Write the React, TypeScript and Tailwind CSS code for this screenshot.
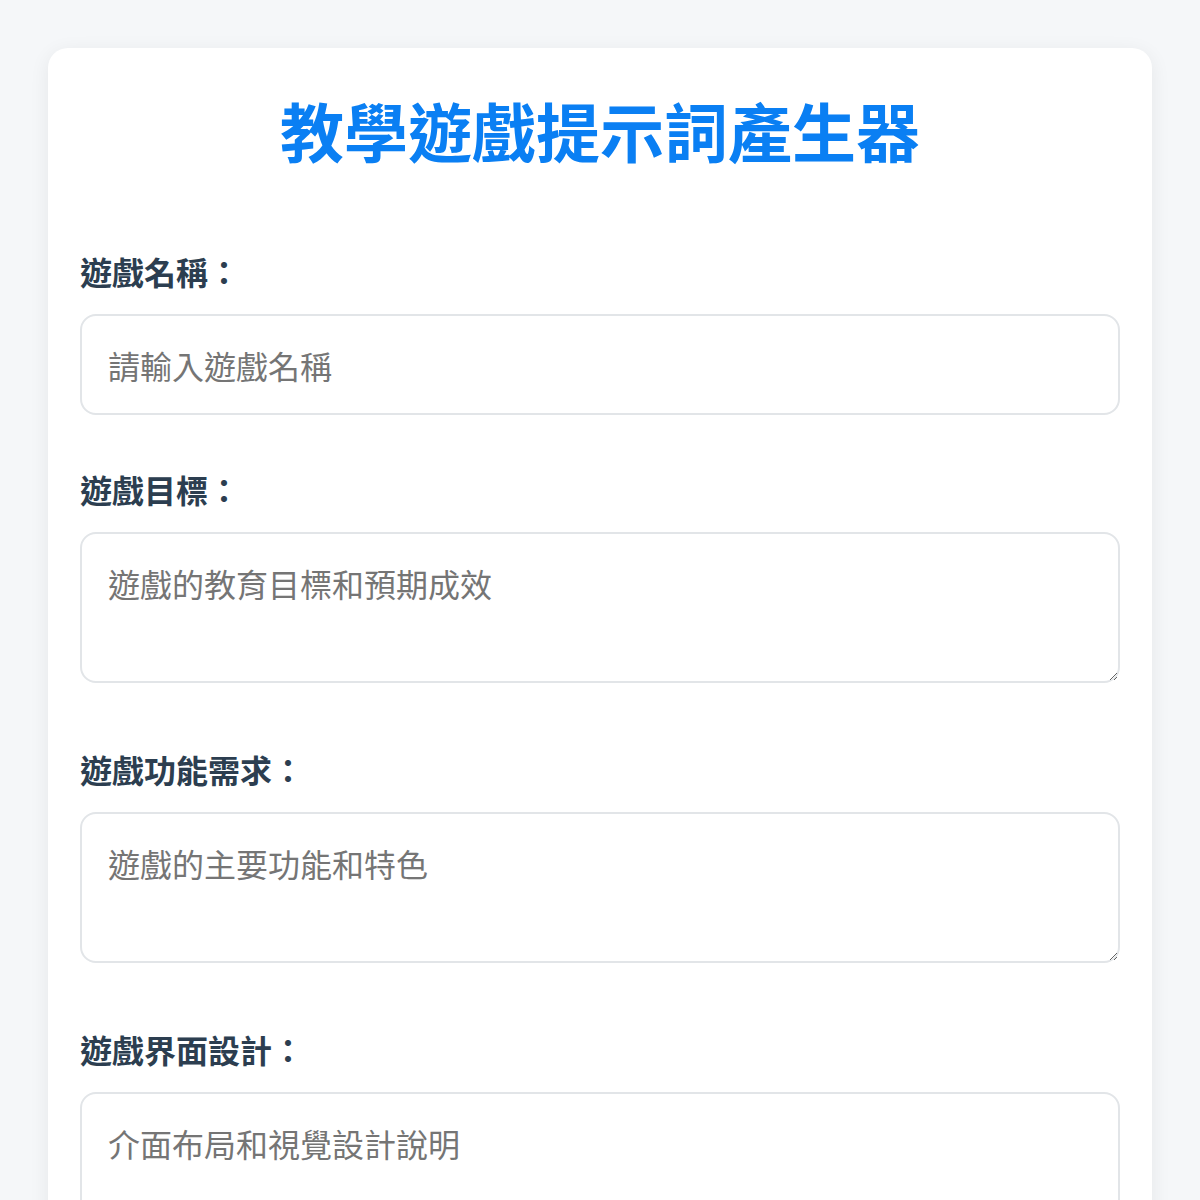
export default function App() {
  const fields = [
    { label: "遊戲名稱：", placeholder: "請輸入遊戲名稱", multi: false },
    { label: "遊戲目標：", placeholder: "遊戲的教育目標和預期成效", multi: true },
    { label: "遊戲功能需求：", placeholder: "遊戲的主要功能和特色", multi: true },
    { label: "遊戲界面設計：", placeholder: "介面布局和視覺設計說明", multi: true },
  ];

  return (
    <div className="min-h-screen bg-[#f5f7f9] p-[48px] font-['Noto_Sans_CJK_TC','Noto_Sans',sans-serif]">
      <div className="rounded-[20px] bg-white px-[32px] pt-[43px] pb-[40px] shadow-[0_4px_20px_rgba(0,0,0,0.07)]">
        <h1 className="mb-[79px] text-center text-[64px] font-bold leading-[77px] text-[#0a7ff3]">
          教學遊戲提示詞產生器
        </h1>

        {fields.map((f) => (
          <div key={f.label} className={f.multi ? "mb-[62px]" : "mb-[50px]"}>
            <label className="mb-[19px] block text-[32px] font-bold leading-[48px] text-[#2c3e50]">
              {f.label}
            </label>
            {f.multi ? (
              <textarea
                placeholder={f.placeholder}
                className="block h-[151px] w-full rounded-[16px] border-2 border-[#e2e5e8] px-[26px] py-[24px] text-[32px] leading-[51px] text-[#2c3e50] outline-none placeholder:text-[#757575]"
              />
            ) : (
              <input
                type="text"
                placeholder={f.placeholder}
                className="block h-[101px] w-full rounded-[16px] border-2 border-[#e2e5e8] px-[26px] text-[32px] leading-[51px] text-[#2c3e50] outline-none placeholder:text-[#757575]"
              />
            )}
          </div>
        ))}
      </div>
    </div>
  );
}
